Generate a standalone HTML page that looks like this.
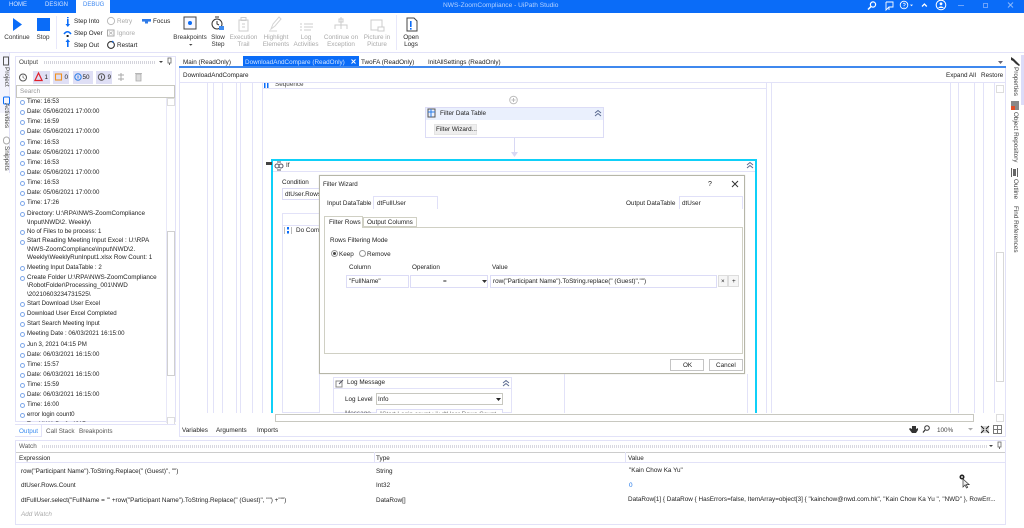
<!DOCTYPE html>
<html>
<head>
<meta charset="utf-8">
<style>
html,body{margin:0;padding:0;background:#fff;}
#p{position:relative;width:1024px;height:528px;overflow:hidden;background:#fff;font-family:"Liberation Sans",sans-serif;font-size:6.35px;color:#222;filter:blur(.3px);}
#p div,#p span.a,#p svg{position:absolute;}
.t{white-space:nowrap;line-height:9px;}
.g{color:#aaa;text-align:center;line-height:7px;}
.c{text-align:center;line-height:7px;color:#333;}
.l{background:#e2e2f8;}
.v{writing-mode:vertical-rl;white-space:nowrap;color:#444;}
.d{width:3px;height:3px;border:1px solid #7fa8ea;border-radius:50%;}
.in{background:#fff;border:1px solid #dcdcf6;line-height:9px;white-space:nowrap;box-sizing:border-box;padding-left:3px;}
#o .t{font-size:6.12px;}
#o .t.w{font-size:6.35px;line-height:8.600px;}
</style>
</head>
<body>
<div id="p">
<!-- title bar -->
<div style="left:0;top:0;width:1024px;height:13px;background:#0a6cf8"></div>
<div style="left:76px;top:0;width:34px;height:14px;background:#fff"></div>
<div class="t" style="left:9px;top:1px;color:#d8e6ff;font-size:6px">HOME</div>
<div class="t" style="left:45px;top:1px;color:#d8e6ff;font-size:6px">DESIGN</div>
<div class="t" style="left:83px;top:1px;color:#3b86f0;font-size:6px">DEBUG</div>
<div class="t" style="left:443px;top:1px;color:#b5d2ff;font-size:6.6px">NWS-ZoomCompliance - UiPath Studio</div>
<svg style="left:860px;top:0" width="164" height="13" viewBox="0 0 164 13" fill="none" stroke="#fff">
<circle cx="13" cy="4.500" r="2.600" stroke-width="1.200"/><path d="M11 6.500L8 9.500" stroke-width="1.500"/>
<path d="M26 2h7v5h-4v3M26 2v8l3-3" stroke-width=".9"/>
<circle cx="44" cy="5" r="3.800" stroke-width=".9"/><path d="M43 3.600q1-1 2 0t-1 1.800v.8M44 7v.6" stroke-width=".7"/><path d="M50 4.600h3l-1.500 1.600z" fill="#fff" stroke="none"/>
<path d="M62 6.500l2.400-2.400 2.400 2.400" stroke-width="1.300"/>
<circle cx="81" cy="5" r="4.800" stroke-width="1"/><circle cx="81" cy="3.800" r="1.400" fill="#fff" stroke="none"/><path d="M78 8q3-3.200 6 0z" fill="#fff" stroke="none"/>
<path d="M98 5.500h6" stroke="#6ba3fb"/><rect x="123.500" y="3.500" width="4" height="4" stroke="#6ba3fb"/>
<path d="M148 2.500l5 5M153 2.500l-5 5" stroke="#8ab8fc"/>
</svg>

<!-- ribbon -->
<div class="l" style="left:0;top:52px;width:1024px;height:1px"></div>
<svg style="left:0;top:14px" width="420" height="38" viewBox="0 0 420 38">
<path d="M13 4v13l9-6.500z" fill="#0a6cf8"/>
<rect x="37" y="4" width="13" height="13" fill="#0a6cf8"/>
<path d="M56.500 2v33" stroke="#e8e8fa"/>
<path d="M67 5h1.600v5h-1.600z M65.500 10h4.600l-2.300 3z M67 3h1.600v1.200h-1.600z" fill="#0a6cf8"/>
<path d="M64 20q3.500-4.500 7 0" stroke="#0a6cf8" stroke-width="1.500" fill="none"/><rect x="66.600" y="21" width="2" height="2" fill="#222"/>
<path d="M67 28h1.600v5h-1.600z M65.500 28h4.600l-2.300-3z" fill="#0a6cf8"/>
<circle cx="111" cy="7" r="3.600" fill="none" stroke="#bbb"/>
<rect x="107.500" y="16" width="6.500" height="6" fill="none" stroke="#aaa"/><path d="M109 17.500l3.500 3M112.500 17.500l-3.500 3" stroke="#aaa" stroke-width=".7"/>
<circle cx="111" cy="31" r="3.400" fill="none" stroke="#333" stroke-width="1.100"/><path d="M112 26.500l2 1.200-1.400 1.200" fill="#0a6cf8"/>
<rect x="142" y="5" width="9" height="2.600" fill="#2f7be8"/><rect x="145" y="7.500" width="3" height="2" fill="#2f7be8"/>
<rect x="184" y="3" width="12" height="12" fill="#f8f8ff" stroke="#444"/><circle cx="190" cy="9" r="2" fill="#0a6cf8"/>
<path d="M189 30h3.500l-1.700 1.800z" fill="#444"/>
<circle cx="217" cy="10" r="5" fill="none" stroke="#333"/><path d="M217 7v3l2 1M215 3h4" stroke="#333" fill="none"/><rect x="219" y="12" width="5" height="4" fill="#3f8cf0"/>
<rect x="239" y="6" width="9" height="11" fill="none" stroke="#ccc"/><rect x="241" y="3.500" width="5" height="3" fill="none" stroke="#ccc"/><path d="M242 10h3M242 13h3" stroke="#ccc"/>
<path d="M271 15l2-5 6-7 2 2-6 7z" fill="none" stroke="#d4d4d4"/><path d="M269 17h8" stroke="#d4d4d4"/>
<path d="M300 10h2M304 10h9M300 13h2M304 13h9M300 16h2M304 16h7" stroke="#ccc"/>
<path d="M341 3v5M335 15v-4h12v4M341 8v7" stroke="#ccc" fill="none"/><rect x="339" y="5" width="4" height="3" fill="none" stroke="#ccc"/>
<rect x="371" y="6" width="11" height="10" fill="none" stroke="#ccc"/><rect x="378" y="13" width="6" height="4" fill="#fff" stroke="#ccc"/>
<path d="M396.500 1v35M426.500 1v35" stroke="#e8e8fa"/>
<path d="M407 4h7l3 3v10h-10z" fill="#fff" stroke="#444"/><rect x="410" y="7" width="1.600" height="6" fill="#0a6cf8"/><rect x="410" y="14" width="1.600" height="1.600" fill="#0a6cf8"/>
</svg>
<div class="c" style="left:0;top:34px;width:34px">Continue</div>
<div class="c" style="left:30px;top:34px;width:26px">Stop</div>
<div class="t" style="left:74px;top:17px">Step Into</div>
<div class="t" style="left:74px;top:29px">Step Over</div>
<div class="t" style="left:74px;top:41px">Step Out</div>
<div class="t" style="left:117px;top:17px;color:#aaa">Retry</div>
<div class="t" style="left:117px;top:29px;color:#aaa">Ignore</div>
<div class="t" style="left:117px;top:41px">Restart</div>
<div class="t" style="left:153px;top:17px">Focus</div>
<div class="c" style="left:170px;top:34px;width:40px">Breakpoints</div>
<div class="c" style="left:206px;top:34px;width:24px">Slow<br>Step</div>
<div class="g" style="left:227px;top:34px;width:33px">Execution<br>Trail</div>
<div class="g" style="left:258px;top:34px;width:36px">Highlight<br>Elements</div>
<div class="g" style="left:291px;top:34px;width:30px">Log<br>Activities</div>
<div class="g" style="left:319px;top:34px;width:44px">Continue on<br>Exception</div>
<div class="g" style="left:359px;top:34px;width:36px">Picture in<br>Picture</div>
<div class="c" style="left:398px;top:34px;width:26px;color:#222">Open<br>Logs</div>

<!-- left side rail -->
<div style="left:0;top:53px;width:10px;height:60px;background:#f4f4fd"></div>
<div class="l" style="left:9px;top:53px;width:1px;height:120px"></div>
<svg style="left:2px;top:56px" width="8" height="100" fill="none" stroke="#555"><rect x="1.500" y="1" width="5" height="8"/><rect x="1.500" y="41" width="6" height="7" rx="1" stroke="#0a6cf8"/><rect x="1.500" y="81" width="6" height="7" rx="3" stroke="#aaa"/></svg>
<div class="v t" style="left:2px;top:67px;width:9px;line-height:9px">Project</div>
<div class="v t" style="left:2px;top:103px;width:9px;line-height:9px">Activities</div>
<div class="v t" style="left:2px;top:146px;width:9px;line-height:9px">Snippets</div>

<!-- output panel -->
<div style="left:15px;top:56px;width:161px;height:366px;border:1px solid #e2e2f8;box-sizing:border-box"></div>
<div class="t" style="left:19px;top:58px;color:#444">Output</div>
<div style="left:44px;top:61px;width:112px;height:3px;background:repeating-linear-gradient(90deg,#d4d4dc 0 1px,#fff 1px 2px)"></div>
<svg style="left:158px;top:57px" width="16" height="9"><path d="M1 4h4L3 6z" fill="#444"/><rect x="10" y="1" width="3" height="5" fill="none" stroke="#666" stroke-width=".8"/><path d="M11.500 6v2" stroke="#666"/></svg>
<svg style="left:18px;top:70px" width="130" height="16">
<circle cx="5" cy="7.500" r="3.500" fill="none" stroke="#555"/><path d="M5 5.500v2l1.500 1" stroke="#555" fill="none" stroke-width=".7"/>
<rect x="15" y="1" width="17" height="13" fill="#dfdff5"/><path d="M20.500 3l-3.600 7.500h7.200z" fill="none" stroke="#e0202a" stroke-width="1.200"/>
<rect x="35" y="1" width="16" height="13" fill="#dfdff5"/><rect x="37.500" y="4" width="6" height="6" fill="none" stroke="#f09020" stroke-width="1.100"/>
<rect x="55" y="1" width="20" height="13" fill="#dfdff5"/><circle cx="60" cy="7" r="3.200" fill="none" stroke="#2a7de8"/><path d="M60 5.500v3" stroke="#2a7de8"/>
<rect x="78" y="1" width="16" height="13" fill="#dfdff5"/><circle cx="83.500" cy="7" r="3.200" fill="none" stroke="#555"/><path d="M83.500 5.500v3" stroke="#555"/>
<path d="M100 5h6M100 9h6M103 3v8" stroke="#aaa"/>
<path d="M118 4h5v7h-5zM117 3.500h7" fill="#ddd" stroke="#aaa" stroke-width=".8"/>
</svg>
<div class="t" style="left:44.500px;top:73px">1</div>
<div class="t" style="left:64.500px;top:73px">0</div>
<div class="t" style="left:82.500px;top:73px">50</div>
<div class="t" style="left:107.500px;top:73px">9</div>
<div style="left:16px;top:85px;width:159px;height:13px;border:1px solid #c8c8c0;box-sizing:border-box;background:#fff"></div>
<div class="t" style="left:20px;top:87px;color:#999">Search</div>

<div id="o" style="left:16px;top:98px;width:158px;height:324px;overflow:hidden">
<div class="d" style="left:4px;top:2px"></div><div class="t" style="left:11px;top:-1px">Time: 16:53</div>
<div class="d" style="left:4px;top:12px"></div><div class="t" style="left:11px;top:9px">Date: 05/06/2021 17:00:00</div>
<div class="d" style="left:4px;top:22px"></div><div class="t" style="left:11px;top:19px">Time: 16:59</div>
<div class="d" style="left:4px;top:32px"></div><div class="t" style="left:11px;top:29px">Date: 05/06/2021 17:00:00</div>
<div class="d" style="left:4px;top:43px"></div><div class="t" style="left:11px;top:40px">Time: 16:53</div>
<div class="d" style="left:4px;top:53px"></div><div class="t" style="left:11px;top:50px">Date: 05/06/2021 17:00:00</div>
<div class="d" style="left:4px;top:63px"></div><div class="t" style="left:11px;top:60px">Time: 16:53</div>
<div class="d" style="left:4px;top:73px"></div><div class="t" style="left:11px;top:70px">Date: 05/06/2021 17:00:00</div>
<div class="d" style="left:4px;top:83px"></div><div class="t" style="left:11px;top:80px">Time: 16:53</div>
<div class="d" style="left:4px;top:93px"></div><div class="t" style="left:11px;top:90px">Date: 05/06/2021 17:00:00</div>
<div class="d" style="left:4px;top:103px"></div><div class="t" style="left:11px;top:100px">Time: 17:26</div>
<div class="d" style="left:4px;top:114px"></div><div class="t w" style="left:11px;top:112px">Directory: U:\RPA\NWS-ZoomCompliance<br>\Input\NWD\2. Weekly\</div>
<div class="d" style="left:4px;top:132px"></div><div class="t" style="left:11px;top:129px">No of Files to be process: 1</div>
<div class="d" style="left:4px;top:142px"></div><div class="t w" style="left:11px;top:139px">Start Reading Meeting Input Excel : U:\RPA<br>\NWS-ZoomCompliance\Input\NWD\2.<br>Weekly\WeeklyRunInput1.xlsx Row Count: 1</div>
<div class="d" style="left:4px;top:168px"></div><div class="t" style="left:11px;top:165px">Meeting Input DataTable : 2</div>
<div class="d" style="left:4px;top:178px"></div><div class="t w" style="left:11px;top:175.500px">Create Folder U:\RPA\NWS-ZoomCompliance<br>\RobotFolder\Processing_001\NWD<br>\20210603234731525\</div>
<div class="d" style="left:4px;top:204px"></div><div class="t" style="left:11px;top:201px">Start Download User Excel</div>
<div class="d" style="left:4px;top:214px"></div><div class="t" style="left:11px;top:211px">Download User Excel Completed</div>
<div class="d" style="left:4px;top:224px"></div><div class="t" style="left:11px;top:221px">Start Search Meeting Input</div>
<div class="d" style="left:4px;top:234px"></div><div class="t" style="left:11px;top:231px">Meeting Date : 06/03/2021 16:15:00</div>
<div class="d" style="left:4px;top:245px"></div><div class="t" style="left:11px;top:242px">Jun 3, 2021 04:15 PM</div>
<div class="d" style="left:4px;top:255px"></div><div class="t" style="left:11px;top:252px">Date: 06/03/2021 16:15:00</div>
<div class="d" style="left:4px;top:265px"></div><div class="t" style="left:11px;top:262px">Time: 15:57</div>
<div class="d" style="left:4px;top:275px"></div><div class="t" style="left:11px;top:272px">Date: 06/03/2021 16:15:00</div>
<div class="d" style="left:4px;top:285px"></div><div class="t" style="left:11px;top:282px">Time: 15:59</div>
<div class="d" style="left:4px;top:295px"></div><div class="t" style="left:11px;top:292px">Date: 06/03/2021 16:15:00</div>
<div class="d" style="left:4px;top:305px"></div><div class="t" style="left:11px;top:302px">Time: 16:00</div>
<div class="d" style="left:4px;top:315px"></div><div class="t" style="left:11px;top:312px">error login count0</div>
<div class="d" style="left:4px;top:325px"></div><div class="t" style="left:11px;top:322px">Tar: UX11 Draft: 4017</div>
</div>
<!-- output scrollbar -->
<div style="left:166px;top:98px;width:9px;height:325px;background:#fff;border-left:1px solid #e8e8f8;box-sizing:border-box"></div>
<div style="left:167px;top:98px;width:8px;height:8px;border:1px solid #ddd;box-sizing:border-box"></div>
<div style="left:167px;top:231px;width:8px;height:145px;border:1px solid #d0d0d0;box-sizing:border-box;background:#fff"></div>
<div style="left:167px;top:417px;width:8px;height:8px;border:1px solid #ddd;box-sizing:border-box"></div>
<div style="left:15px;top:424px;width:161px;height:1px;background:#e2e2f8"></div>
<div class="t" style="left:19px;top:427px;color:#3b8cf0">Output</div>
<div style="left:15px;top:425px;width:27px;height:12px;border-right:1px solid #e2e2f8;border-bottom:1px solid #e2e2f8;box-sizing:border-box"></div>
<div class="t" style="left:46px;top:427px;color:#555">Call Stack</div>
<div class="t" style="left:79px;top:427px;color:#555">Breakpoints</div>

<!-- doc tabs -->
<div class="t" style="left:183px;top:58px;color:#222">Main (ReadOnly)</div>
<div style="left:243px;top:56px;width:116px;height:11px;background:#0a6cf8"></div>
<div class="t" style="left:245px;top:58px;color:#cfe2ff">DownloadAndCompare (ReadOnly)</div>
<svg style="left:350px;top:58px" width="8" height="8" stroke="#fff"><path d="M1.500 1.500l4 4M5.500 1.500l-4 4"/></svg>
<div class="t" style="left:361px;top:58px">TwoFA (ReadOnly)</div>
<div class="t" style="left:428px;top:58px">InitAllSettings (ReadOnly)</div>
<svg style="left:998px;top:60px" width="7" height="5"><path d="M0 1h5L2.500 4z" fill="#667"/></svg>
<div style="left:179px;top:66px;width:827px;height:2px;background:#3f88ee"></div>

<!-- canvas frame -->
<div class="t" style="left:183px;top:71px">DownloadAndCompare</div>
<div class="t" style="left:946px;top:71px">Expand All</div>
<div class="t" style="left:981px;top:71px">Restore</div>
<div class="l" style="left:179px;top:82px;width:827px;height:1px"></div>
<div class="l" style="left:179px;top:68px;width:1px;height:368px"></div>
<div class="l" style="left:1005px;top:68px;width:1px;height:368px"></div>
<!-- canvas guide lines -->
<div class="l" style="left:207px;top:83px;width:1px;height:330px"></div>
<div class="l" style="left:213px;top:83px;width:1px;height:330px"></div>
<div class="l" style="left:222px;top:83px;width:1px;height:330px"></div>
<div class="l" style="left:236px;top:83px;width:1px;height:330px"></div>
<div class="l" style="left:240px;top:83px;width:1px;height:330px"></div>
<div class="l" style="left:252px;top:83px;width:1px;height:330px"></div>
<div class="l" style="left:262px;top:83px;width:1px;height:330px"></div>
<div class="l" style="left:766px;top:83px;width:1px;height:330px"></div>
<div class="l" style="left:771px;top:83px;width:1px;height:330px"></div>
<div class="l" style="left:950px;top:83px;width:1px;height:330px"></div>
<div class="l" style="left:958px;top:83px;width:1px;height:330px"></div>
<div class="l" style="left:974px;top:83px;width:1px;height:330px"></div>
<div class="l" style="left:983px;top:83px;width:1px;height:330px"></div>
<div class="l" style="left:994px;top:83px;width:1px;height:330px"></div>
<!-- sequence header -->
<div class="t" style="left:275px;top:80px;color:#444;clip-path:inset(3px 0 0 0)">Sequence</div>
<div class="l" style="left:262px;top:88px;width:505px;height:1px"></div>
<svg style="left:263px;top:83px" width="8" height="6"><rect x="1" y="0" width="1.500" height="5" fill="#0a6cf8"/><rect x="4" y="0" width="1.500" height="5" fill="#0a6cf8"/></svg>
<svg style="left:509px;top:95px" width="10" height="10" fill="none" stroke="#bbb"><circle cx="4.500" cy="5" r="3.800"/><path d="M2.500 5h4M4.500 3v4"/></svg>

<!-- filter data table -->
<div style="left:425px;top:107px;width:179px;height:31px;border:1px solid #dcdcf6;box-sizing:border-box;background:#fff"></div>
<div style="left:426px;top:108px;width:177px;height:12px;background:#eaf0fd"></div>
<svg style="left:427px;top:108px" width="10" height="11" fill="none" stroke="#555"><rect x="1" y="1" width="7" height="8"/><path d="M1 4h7M4 1v8" stroke="#2a7de8"/></svg>
<div class="t" style="left:440px;top:109px">Filter Data Table</div>
<svg style="left:594px;top:109px" width="8" height="9" fill="none" stroke="#5a6a90"><path d="M1 4l3-2.500L7 4M1 7l3-2.500L7 7"/></svg>
<div style="left:434px;top:124px;width:43px;height:11px;background:#eee;border:1px solid #e4e4e4;box-sizing:border-box"></div>
<div class="t" style="left:436px;top:125px">Filter Wizard...</div>
<div style="left:514px;top:138px;width:1px;height:18px;background:#d8d8f4"></div>
<svg style="left:511px;top:152px" width="7" height="6"><path d="M0 0h7L3.500 5z" fill="#d8d8f4"/></svg>

<!-- if activity -->
<div style="left:271px;top:159px;width:486px;height:262px;border:2px solid #0fd0f8;border-bottom:none;box-sizing:border-box;background:#fff"></div>
<div class="l" style="left:273px;top:171px;width:482px;height:1px"></div>
<div style="left:266px;top:162px;width:6px;height:3px;background:#444"></div>
<svg style="left:274px;top:161px" width="10" height="10" fill="none" stroke="#556"><circle cx="3" cy="5" r="2"/><circle cx="7" cy="5" r="2"/><path d="M3 1h4M3 9h4"/></svg>
<div class="t" style="left:286px;top:161px">If</div>
<svg style="left:746px;top:161px" width="8" height="9" fill="none" stroke="#5a6a90"><path d="M1 4l3-2.500L7 4M1 7l3-2.500L7 7"/></svg>
<div class="t" style="left:282px;top:178px">Condition</div>
<div class="in" style="left:282px;top:188px;width:40px;height:12px;padding-left:2px;padding-top:1px">dtUser.Rows.Co</div>
<div style="left:282px;top:213px;width:38px;height:200px;border:1px solid #e2e2f8;box-sizing:border-box"></div>
<div class="l" style="left:282px;top:225px;width:38px;height:1px"></div>
<svg style="left:284px;top:226px" width="8" height="9"><path d="M.5 1v7M7.500 1v7" stroke="#bbb" fill="none"/><rect x="3" y="1" width="2" height="2.500" fill="#0a6cf8"/><rect x="3" y="5" width="2" height="2.500" fill="#0a6cf8"/></svg>
<div class="t" style="left:296px;top:226px;overflow:hidden;width:24px">Do Compare</div>
<div class="l" style="left:564px;top:374px;width:1px;height:39px"></div>
<div class="l" style="left:747px;top:374px;width:1px;height:39px"></div>

<!-- dialog -->
<div style="left:319px;top:175px;width:426px;height:199px;background:#fff;border:1px solid #b6b6a8;box-sizing:border-box;box-shadow:0 0 1px #ccc"></div>
<div class="t" style="left:323px;top:180px;font-size:6.200px">Filter Wizard</div>
<div class="t" style="left:708px;top:180px;font-size:7px">?</div>
<svg style="left:731px;top:180px" width="9" height="9" stroke="#333"><path d="M1 1l6 6M7 1l-6 6"/></svg>
<div class="t" style="left:327px;top:199px">Input DataTable</div>
<div style="left:373px;top:196px;width:65px;height:13px;border:1px solid #e0e0f8;border-bottom:none;box-sizing:border-box"></div>
<div class="t" style="left:377px;top:199px">dtFullUser</div>
<div class="t" style="left:626px;top:199px">Output DataTable</div>
<div style="left:679px;top:196px;width:64px;height:13px;border:1px solid #e0e0f8;border-bottom:none;box-sizing:border-box"></div>
<div class="t" style="left:682px;top:199px">dtUser</div>
<!-- tab panel -->
<div style="left:324px;top:227px;width:419px;height:127px;border:1px solid #d0d0c4;box-sizing:border-box;background:#fff"></div>
<div style="left:324px;top:216px;width:39px;height:12px;background:#fff;border:1px solid #d0d0c4;border-bottom:none;box-sizing:border-box"></div>
<div class="t" style="left:329px;top:218px">Filter Rows</div>
<div style="left:363px;top:217px;width:54px;height:10px;background:#fff;border:1px solid #d0d0c4;box-sizing:border-box"></div>
<div class="t" style="left:367px;top:218px">Output Columns</div>
<div class="t" style="left:330px;top:236px">Rows Filtering Mode</div>
<div style="left:331px;top:250px;width:5px;height:5px;border:1px solid #999;border-radius:50%;background:#fff"></div>
<div style="left:333px;top:252px;width:3px;height:3px;background:#444;border-radius:50%"></div>
<div class="t" style="left:339px;top:250px">Keep</div>
<div style="left:359px;top:250px;width:5px;height:5px;border:1px solid #999;border-radius:50%;background:#fff"></div>
<div class="t" style="left:367px;top:250px">Remove</div>
<div class="t" style="left:349px;top:263px">Column</div>
<div class="t" style="left:412px;top:263px">Operation</div>
<div class="t" style="left:492px;top:263px">Value</div>
<div class="in" style="left:346px;top:275px;width:63px;height:13px;padding-top:1px;padding-left:2px;border-width:1px;">"FullName"</div>
<div style="left:410px;top:275px;width:78px;height:13px;border:1px solid #dcdcf6;box-sizing:border-box"></div>
<div class="t" style="left:443px;top:277px">=</div>
<svg style="left:482px;top:280px" width="6" height="4"><path d="M0 0h5L2.500 3z" fill="#333"/></svg>
<div class="in" style="left:490px;top:275px;width:227px;height:13px;padding-top:1px;padding-left:2px">row("Participant Name").ToString.replace(" (Guest)","")</div>
<div style="left:718px;top:275px;width:10px;height:12px;border:1px solid #ddd;box-sizing:border-box;background:#f6f6f6"></div>
<div style="left:728px;top:275px;width:11px;height:12px;border:1px solid #ddd;box-sizing:border-box;background:#f6f6f6"></div>
<div class="t" style="left:721px;top:277px">×</div>
<div class="t" style="left:732px;top:277px">+</div>
<div style="left:670px;top:359px;width:34px;height:12px;border:1px solid #c4c4c4;box-sizing:border-box;background:#fff"></div>
<div class="t" style="left:683px;top:361px">OK</div>
<div style="left:709px;top:359px;width:34px;height:12px;border:1px solid #c4c4c4;box-sizing:border-box;background:#fff"></div>
<div class="t" style="left:716px;top:361px">Cancel</div>

<!-- log message -->
<div style="left:333px;top:377px;width:179px;height:36px;border:1px solid #e2e2f8;box-sizing:border-box;background:#fff"></div>
<div class="l" style="left:334px;top:388px;width:177px;height:1px"></div>
<svg style="left:335px;top:378px" width="10" height="10" fill="none" stroke="#888"><rect x="1" y="3" width="6" height="6"/><path d="M4 6l4-4" stroke="#556"/></svg>
<div class="t" style="left:347px;top:378px">Log Message</div>
<svg style="left:502px;top:379px" width="8" height="9" fill="none" stroke="#5a6a90"><path d="M1 4l3-2.500L7 4M1 7l3-2.500L7 7"/></svg>
<div class="t" style="left:345px;top:395px">Log Level</div>
<div style="left:376px;top:393px;width:127px;height:12px;border:1px solid #c8c8c0;box-sizing:border-box"></div>
<div class="t" style="left:378px;top:395px">Info</div>
<svg style="left:496px;top:398px" width="6" height="4"><path d="M0 0h5L2.500 3z" fill="#222"/></svg>
<div class="in" style="left:376px;top:409px;width:127px;height:6px;overflow:hidden;color:#777;line-height:9px">"Start Login count : "+dtUser.Rows.Count</div>
<div class="t" style="left:345px;top:409px;height:4px;overflow:hidden;color:#666">Message</div>

<!-- canvas scrollbars -->
<div style="left:180px;top:413px;width:825px;height:10px;background:#fff"></div>
<div style="left:275px;top:414px;width:699px;height:8px;border:1px solid #c8c8c0;box-sizing:border-box;background:#fff"></div>
<div style="left:996px;top:84px;width:9px;height:339px;background:#fff"></div>
<div style="left:996px;top:85px;width:8px;height:8px;border:1px solid #ddd;box-sizing:border-box"></div>
<div style="left:996px;top:252px;width:8px;height:130px;border:1px solid #d8d8d8;box-sizing:border-box"></div>
<div style="left:996px;top:414px;width:8px;height:8px;border:1px solid #ddd;box-sizing:border-box"></div>
<!-- canvas bottom bar -->
<div class="t" style="left:182px;top:426px">Variables</div>
<div class="t" style="left:216px;top:426px">Arguments</div>
<div class="t" style="left:257px;top:426px">Imports</div>
<svg style="left:906px;top:424px" width="100" height="11">
<path d="M6 9L3 5l1-1 2 1V2h4v3l2-1v2l-2 3z" fill="#333"/>
<circle cx="21" cy="4" r="2.300" fill="none" stroke="#333"/><path d="M19 6l-2 2.500" stroke="#333" stroke-width="1.300"/>
<path d="M62 4h5l-2.500 2.500z" fill="#aaa"/>
<path d="M75 2h8v7h-8z" fill="#aaa" opacity=".5"/><path d="M75 2l3 3M83 2l-3 3M75 9l3-3M83 9l-3-3" stroke="#222"/>
<rect x="87.500" y="1.500" width="8" height="8" fill="none" stroke="#777"/><path d="M87.500 5.500h8M91.500 1.500v8" stroke="#777"/>
</svg>
<div class="t" style="left:937px;top:426px;color:#444">100%</div>
<div class="l" style="left:179px;top:436px;width:827px;height:1px"></div>

<!-- right rail -->
<div style="left:1021px;top:55px;width:3px;height:50px;background:#dcdcf8"></div>
<svg style="left:1009px;top:56px" width="13" height="130">
<path d="M2 1l3 2 3 3 3 3-1 1-3-2-3-3-2-1z" fill="#333"/>
<rect x="2" y="45" width="8" height="9" fill="#888"/><rect x="2" y="50" width="4" height="4" fill="#e0502a"/>
<path d="M2 112h1v9H2zM8 112h1v9H8zM4 113h3v7H4z" fill="#666"/>
</svg>
<div class="v t" style="left:1010px;top:67px;width:11px;line-height:11px">Properties</div>
<div class="v t" style="left:1010px;top:112px;width:11px;line-height:11px">Object Repository</div>
<div class="v t" style="left:1010px;top:179px;width:11px;line-height:11px">Outline</div>
<div class="v t" style="left:1010px;top:206px;width:11px;line-height:11px">Find References</div>

<!-- watch panel -->
<div style="left:15px;top:440px;width:991px;height:85px;border:1px solid #e2e2f8;box-sizing:border-box"></div>
<div class="t" style="left:19px;top:442px;color:#555">Watch</div>
<div style="left:42px;top:445px;width:945px;height:3px;background:repeating-linear-gradient(90deg,#d8d8e0 0 1px,#fff 1px 2px)"></div>
<svg style="left:988px;top:441px" width="16" height="9"><path d="M1 4h4L3 6z" fill="#444"/><rect x="10" y="1" width="3" height="5" fill="none" stroke="#666" stroke-width=".8"/><path d="M11.500 6v2" stroke="#666"/></svg>
<div style="left:16px;top:452px;width:989px;height:11px;background:#fff;border-top:1px solid #ccc;border-bottom:1px solid #e2e2f8;box-sizing:border-box"></div>
<div class="l" style="left:374px;top:452px;width:1px;height:11px"></div>
<div class="l" style="left:625px;top:452px;width:1px;height:11px"></div>
<div class="t" style="left:19px;top:454px">Expression</div>
<div class="t" style="left:376px;top:454px">Type</div>
<div class="t" style="left:628px;top:454px">Value</div>
<div class="t" style="left:21px;top:467px">row("Participant Name").ToString.Replace(" (Guest)", "")</div>
<div class="t" style="left:376px;top:467px">String</div>
<div class="t" style="left:629px;top:466px">"Kain Chow Ka Yu"</div>
<div class="t" style="left:21px;top:481px">dtUser.Rows.Count</div>
<div class="t" style="left:376px;top:481px">Int32</div>
<div class="t" style="left:629px;top:481px;color:#1a73e8">0</div>
<div class="t" style="left:21px;top:496px">dtFullUser.select("FullName = '" +row("Participant Name").ToString.Replace(" (Guest)", "") +"'")</div>
<div class="t" style="left:376px;top:496px">DataRow[]</div>
<div class="t" style="left:628px;top:495px">DataRow[1] { DataRow { HasErrors=false, ItemArray=object[3] { "kainchow@nwd.com.hk", "Kain Chow Ka Yu ", "NWD" }, RowErr...</div>
<div class="t" style="left:21px;top:510px;color:#aaa;font-style:italic">Add Watch</div>
<svg style="left:958px;top:473px" width="14" height="16">
<circle cx="4" cy="4" r="2.500" fill="#222"/><circle cx="4" cy="4" r="1" fill="#ddd"/>
<path d="M5 6v8l2-2 1.500 3 1.200-.6-1.500-2.800h3z" fill="#eee" stroke="#333" stroke-width=".7"/>
</svg>
</div>
</body>
</html>
